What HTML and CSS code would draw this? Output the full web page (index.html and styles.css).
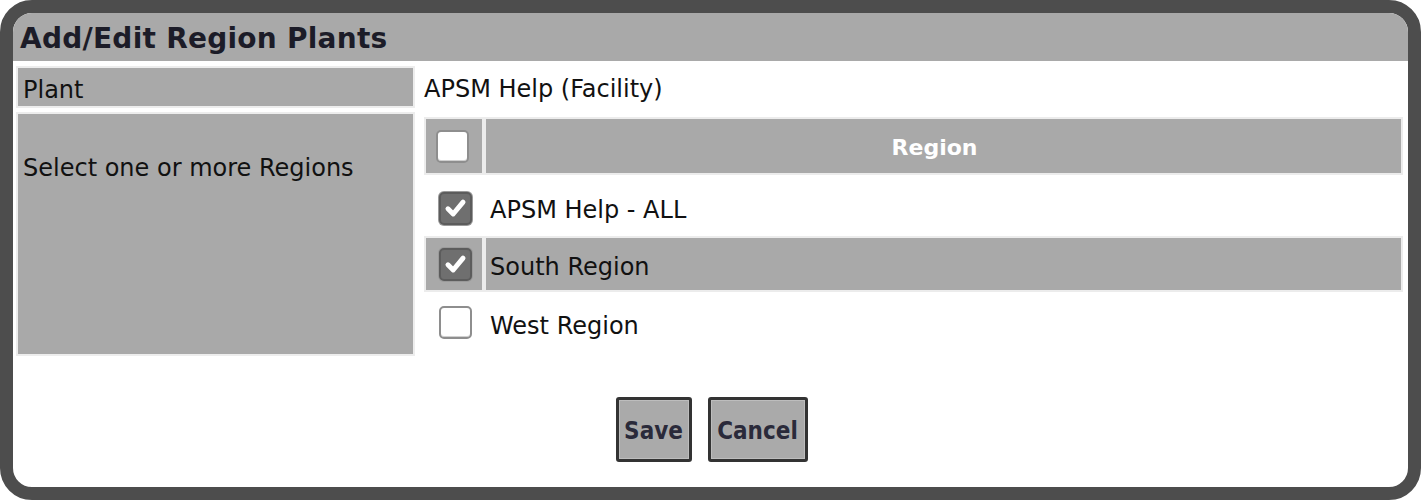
FILE: index.html
```html
<!DOCTYPE html>
<html lang="en">
<head>
<meta charset="utf-8">
<title>Add/Edit Region Plants</title>
<link rel="stylesheet" href="styles.css">
</head>
<body>
<div class="dialog">
  <div class="dialog-title">Add/Edit Region Plants</div>
  <div class="form">
    <div class="label label-short">Plant</div>
    <div class="value">APSM Help (Facility)</div>
    <div class="label label-tall">Select one or more Regions</div>
    <div class="value value-grid">
      <div class="grid">
        <div class="row row-head">
          <div class="cell cell-check"><span class="cb"></span></div>
          <div class="cell cell-name">Region</div>
        </div>
        <div class="row row-first">
          <div class="cell cell-check"><span class="cb cb-on"><svg viewBox="0 0 20 20"><path d="M4.8 10.2 L8.4 13.8 L15.2 5.6"/></svg></span></div>
          <div class="cell cell-name">APSM Help - ALL</div>
        </div>
        <div class="row row-alt">
          <div class="cell cell-check"><span class="cb cb-on"><svg viewBox="0 0 20 20"><path d="M4.8 10.2 L8.4 13.8 L15.2 5.6"/></svg></span></div>
          <div class="cell cell-name">South Region</div>
        </div>
        <div class="row row-last">
          <div class="cell cell-check"><span class="cb"></span></div>
          <div class="cell cell-name">West Region</div>
        </div>
      </div>
    </div>
  </div>
  <div class="actions">
    <button class="btn btn-save" type="button">Save</button>
    <button class="btn btn-cancel" type="button">Cancel</button>
  </div>
</div>
</body>
</html>
```

FILE: styles.css
```css
html, body {
  margin: 0;
  padding: 0;
  background: #ffffff;
}

body {
  font-family: "DejaVu Sans", Verdana, sans-serif;
  color: #111;
}

.dialog {
  box-sizing: border-box;
  width: 1421px;
  height: 500px;
  border: 13px solid #4d4d4d;
  border-radius: 32px;
  background: #ffffff;
  overflow: hidden;
}

.dialog-title {
  height: 48px;
  background: #a9a9a9;
  padding-left: 7px;
  font-size: 28px;
  font-weight: bold;
  line-height: 51px;
  color: #1c1c28;
  letter-spacing: 0.25px;
}

.form {
  display: grid;
  grid-template-columns: 399px 1fr;
  grid-template-rows: 42px 244px;
  column-gap: 3px;
  row-gap: 4px;
  padding: 5px 3px 0 3px;
}

.label {
  box-sizing: border-box;
  background: #a9a9a9;
  border: 2px solid #ededed;
  padding-left: 5px;
  font-size: 24px;
}

.label-short {
  padding-top: 2px;
  line-height: 40px;
}

.label-tall {
  padding-top: 34px;
  line-height: 41px;
}

.value {
  padding-left: 6px;
  font-size: 24px;
  line-height: 47px;
}

.value-grid {
  padding: 5px 2px 0 6px;
  line-height: normal;
}

.grid {
  display: flex;
  flex-direction: column;
}

.row {
  display: flex;
  height: 59px;
}

.cell {
  box-sizing: border-box;
  display: flex;
  align-items: center;
  border: 2px solid transparent;
}

.cell-check {
  width: 60px;
  justify-content: center;
  padding-left: 2px;
}

.cell-name {
  flex: 1;
  padding-left: 4px;
  padding-top: 8px;
  font-size: 24px;
}

.row-head {
  height: 58px;
}

.row-first {
  height: 61px;
}

.row-first .cell-check {
  padding-top: 5px;
}

.row-head .cell,
.row-alt .cell {
  background: #a9a9a9;
  border-color: #ececec;
}

.row-head .cell-name {
  justify-content: center;
  padding-left: 2px;
  padding-right: 20px;
  padding-top: 2px;
  color: #ffffff;
  font-weight: bold;
  font-size: 22px;
}

.row-head .cell-check {
  padding-left: 0;
  padding-right: 4px;
}

.row-alt {
  height: 56px;
}

.row-alt .cell-check {
  padding-top: 1px;
}

.row-alt .cell-name {
  padding-top: 6px;
}

.row-last .cell-check {
  padding-top: 2px;
}

.cb {
  box-sizing: border-box;
  display: inline-block;
  width: 33px;
  height: 33px;
  border: 2px solid #8e8e8e;
  border-radius: 5px;
  background: #ffffff;
  box-shadow: inset 0 -1px 0 #d0d0d0;
}

.cb-on {
  background: #6f6f6f;
  border-color: #5c5c5c;
  box-shadow: 0 0 0 1px #9a9a9a;
}

.cb svg {
  display: block;
  width: 100%;
  height: 100%;
}

.cb svg path {
  fill: none;
  stroke: #ffffff;
  stroke-width: 3.4;
  stroke-linecap: round;
  stroke-linejoin: round;
}

.actions {
  display: flex;
  justify-content: center;
  gap: 16px;
  margin-top: 41px;
  padding-left: 2px;
}

.btn {
  box-sizing: border-box;
  height: 65px;
  padding: 2px 0 0;
  border: 3px solid #333333;
  border-radius: 3px;
  background: #aaaaaa;
  box-shadow: inset 0 0 0 1px #bdbdbd;
  font-family: "DejaVu Sans", Verdana, sans-serif;
  font-stretch: condensed;
  font-size: 24px;
  font-weight: bold;
  color: #2a2a3a;
}

.btn-save {
  width: 76px;
}

.btn-cancel {
  width: 100px;
}
```
